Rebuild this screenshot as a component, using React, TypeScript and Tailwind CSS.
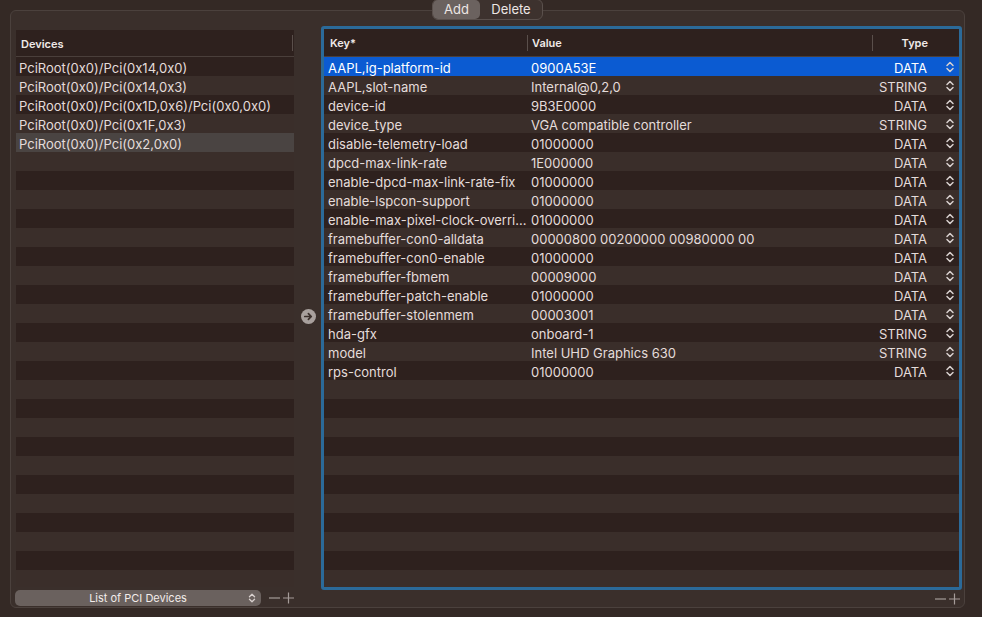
import React from 'react'

const ROWS = 28

const devices = [
  'PciRoot(0x0)/Pci(0x14,0x0)',
  'PciRoot(0x0)/Pci(0x14,0x3)',
  'PciRoot(0x0)/Pci(0x1D,0x6)/Pci(0x0,0x0)',
  'PciRoot(0x0)/Pci(0x1F,0x3)',
  'PciRoot(0x0)/Pci(0x2,0x0)',
]

const props: [string, string, string][] = [
  ['AAPL,ig-platform-id', '0900A53E', 'DATA'],
  ['AAPL,slot-name', 'Internal@0,2,0', 'STRING'],
  ['device-id', '9B3E0000', 'DATA'],
  ['device_type', 'VGA compatible controller', 'STRING'],
  ['disable-telemetry-load', '01000000', 'DATA'],
  ['dpcd-max-link-rate', '1E000000', 'DATA'],
  ['enable-dpcd-max-link-rate-fix', '01000000', 'DATA'],
  ['enable-lspcon-support', '01000000', 'DATA'],
  ['enable-max-pixel-clock-overri…', '01000000', 'DATA'],
  ['framebuffer-con0-alldata', '00000800 00200000 00980000 00', 'DATA'],
  ['framebuffer-con0-enable', '01000000', 'DATA'],
  ['framebuffer-fbmem', '00009000', 'DATA'],
  ['framebuffer-patch-enable', '01000000', 'DATA'],
  ['framebuffer-stolenmem', '00003001', 'DATA'],
  ['hda-gfx', 'onboard-1', 'STRING'],
  ['model', 'Intel UHD Graphics 630', 'STRING'],
  ['rps-control', '01000000', 'DATA'],
]

function stripe(i: number) {
  return i % 2 === 0 ? 'bg-[#2e211e]' : 'bg-[#3a2e2a]'
}

function Stepper() {
  return (
    <svg width="10" height="12" viewBox="0 0 10 12" fill="none" stroke="#d8d0ce" strokeWidth="1.5" strokeLinecap="round" strokeLinejoin="round">
      <path d="M2 4.5 5 1.5 8 4.5" />
      <path d="M2 7.5 5 10.5 8 7.5" />
    </svg>
  )
}

function PlusMinus() {
  return (
    <svg width="25" height="12" viewBox="0 0 25 12" stroke="#a59c99" strokeWidth="1.2">
      <path d="M0 6h11" />
      <path d="M14 6h11M19.5 0.5v11" />
    </svg>
  )
}

function HeaderSep() {
  return <div className="h-[16px] w-px shrink-0 self-center bg-[#5a4f4b]" />
}

export default function App() {
  return (
    <div className="relative h-[617px] w-[982px] overflow-hidden bg-[#342925] text-[13px] leading-[19px] text-[#e4dcda] [font-family:Inter,'Noto_Sans',sans-serif]">
      {/* group box */}
      <div className="absolute left-[10px] top-[10px] flex h-[598px] w-[955px] items-start rounded-[6px] border border-[#4b413d] bg-[#3a2f2b] pl-[5px] pt-[15px]">
        {/* devices */}
        <div className="mt-[4px] flex w-[278px] flex-col">
          <div className="flex h-[557px] flex-col overflow-hidden">
            <div className="flex h-[27px] shrink-0 items-center border-b border-[#4a3f3b] bg-[#2e211e]">
              <span className="flex-1 pl-[5px] pt-[2px] text-[11px] font-semibold text-[#f0eae8]">Devices</span>
              <HeaderSep />
              <div className="w-px" />
            </div>
            {Array.from({ length: ROWS }).map((_, i) => (
              <div
                key={i}
                className={`h-[19px] shrink-0 overflow-hidden whitespace-nowrap pl-[3px] leading-[22px] ${i === 4 ? 'bg-[#4a4442]' : stripe(i)}`}
              >
                {devices[i] ?? ''}
              </div>
            ))}
          </div>
          <div className="mt-[3px] flex items-center">
            <div className="relative -ml-px flex h-[16px] w-[247px] items-center justify-center rounded-[5px] bg-[#6a615e] text-[11px] leading-[16px] text-[#f2ecea]">
              List of PCI Devices
              <div className="absolute right-[4px] top-[2px] scale-[0.85]">
                <Stepper />
              </div>
            </div>
            <div className="ml-[8px]">
              <PlusMinus />
            </div>
          </div>
        </div>

        {/* middle arrow */}
        <div className="flex h-[580px] w-[27px] items-center justify-center pl-[2px]">
          <svg width="15" height="15" viewBox="0 0 15 15">
            <circle cx="7.5" cy="7.5" r="7.5" fill="#a8a09d" />
            <path d="M3.8 7.5h6.4M7.4 4.6l2.9 2.9-2.9 2.9" stroke="#3a2f2b" strokeWidth="1.7" fill="none" strokeLinecap="round" strokeLinejoin="round" />
          </svg>
        </div>

        {/* properties */}
        <div className="flex w-[641px] flex-col">
          <div className="flex h-[564px] flex-col overflow-hidden rounded-[3px] border-[3px] border-[#2b6a99]">
            <div className="flex h-[28px] shrink-0 items-center border-b border-[#4a3f3b] bg-[#2e211e] text-[11px] font-semibold text-[#f0eae8]">
              <div className="w-[203px] shrink-0 pl-[6px] pt-[2px]">Key*</div>
              <HeaderSep />
              <div className="flex-1 pl-[4px] pt-[2px]">Value</div>
              <HeaderSep />
              <div className="w-[86px] shrink-0 pr-[31px] pt-[2px] text-right">Type</div>
            </div>
            {Array.from({ length: ROWS }).map((_, i) => {
              const p = props[i]
              return (
                <div
                  key={i}
                  className={`flex h-[19px] shrink-0 items-center ${i === 0 ? 'bg-[#0b5bd2] text-white' : stripe(i)}`}
                >
                  {p && (
                    <>
                      <div className="w-[204px] shrink-0 whitespace-nowrap pl-[4px] pt-[3px]">{p[0]}</div>
                      <div className="flex-1 truncate pl-[3px] pt-[3px]">{p[1]}</div>
                      <div className="flex w-[86px] shrink-0 items-center justify-end pr-[4px]">
                        <span className="pt-[3px]">{p[2]}</span>
                        <span className="ml-[18px] flex pt-[1px]">
                          <Stepper />
                        </span>
                      </div>
                    </>
                  )}
                </div>
              )
            })}
          </div>
          <div className="flex h-[16px] items-center justify-end pr-[2px] pt-[1px]">
            <PlusMinus />
          </div>
        </div>
      </div>

      {/* segmented control */}
      <div className="absolute left-[432px] top-[-1px] flex h-[21px] w-[111px] items-stretch rounded-[6px] border border-[#5a504c] bg-[#3d322e] text-[13px] text-[#ece6e4]">
        <div className="flex w-[47px] items-center justify-center rounded-[5px] bg-[#6b625f]">Add</div>
        <div className="flex flex-1 items-center justify-center">Delete</div>
      </div>
    </div>
  )
}
